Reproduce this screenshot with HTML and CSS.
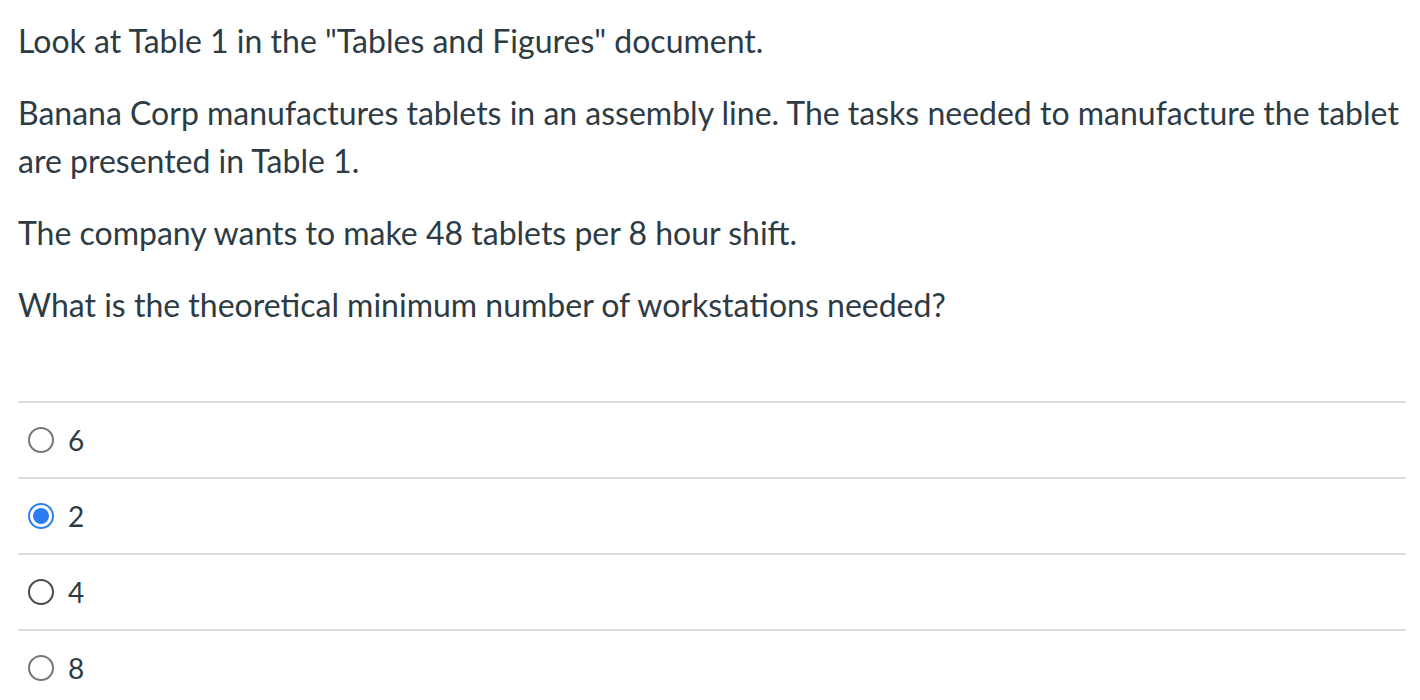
FILE: index.html
```html
<!DOCTYPE html>
<html>
<head>
<meta charset="utf-8">
<link rel="stylesheet" href="styles.css">
</head>
<body>
<div class="question">
  <div class="text">
    <p>Look at Table 1 in the "Tables and Figures" document.</p>
    <p>Banana Corp manufactures tablets in an assembly line. The tasks needed to manufacture the tablet are presented in Table 1.</p>
    <p>The company wants to make 48 tablets per 8 hour shift.</p>
    <p>What is the theoretical minimum number of workstations needed?</p>
  </div>
  <div class="answers">
    <label class="answer"><span class="radio"></span><span class="label">6</span></label>
    <label class="answer"><span class="radio checked"></span><span class="label">2</span></label>
    <label class="answer"><span class="radio hover"></span><span class="label">4</span></label>
    <label class="answer"><span class="radio"></span><span class="label">8</span></label>
  </div>
</div>
</body>
</html>
```

FILE: styles.css
```css
html, body {
  margin: 0;
  padding: 0;
  background: #fff;
}
body {
  font-family: Lato, "Noto Sans", sans-serif;
  color: #2d3b45;
}
.question {
  padding: 17px 14px 0 18px;
}
.text {
  font-size: 32px;
  line-height: 48px;
}
.text p {
  margin: 0 0 24px 0;
}
.answers {
  margin-top: 72px;
}
.answer {
  display: flex;
  align-items: center;
  height: 74px;
  border-top: 2px solid #dcdcdc;
  padding-left: 10px;
  gap: 14px;
  font-size: 28px;
}
.radio {
  box-sizing: border-box;
  width: 26px;
  height: 26px;
  border-radius: 50%;
  border: 2px solid #767676;
  display: flex;
  align-items: center;
  justify-content: center;
}
.radio.hover {
  border-color: #4a4a4a;
}
.radio.checked {
  border-color: #2d7df2;
}
.radio.checked::after {
  content: "";
  width: 16px;
  height: 16px;
  border-radius: 50%;
  background: #2d7df2;
}
```
